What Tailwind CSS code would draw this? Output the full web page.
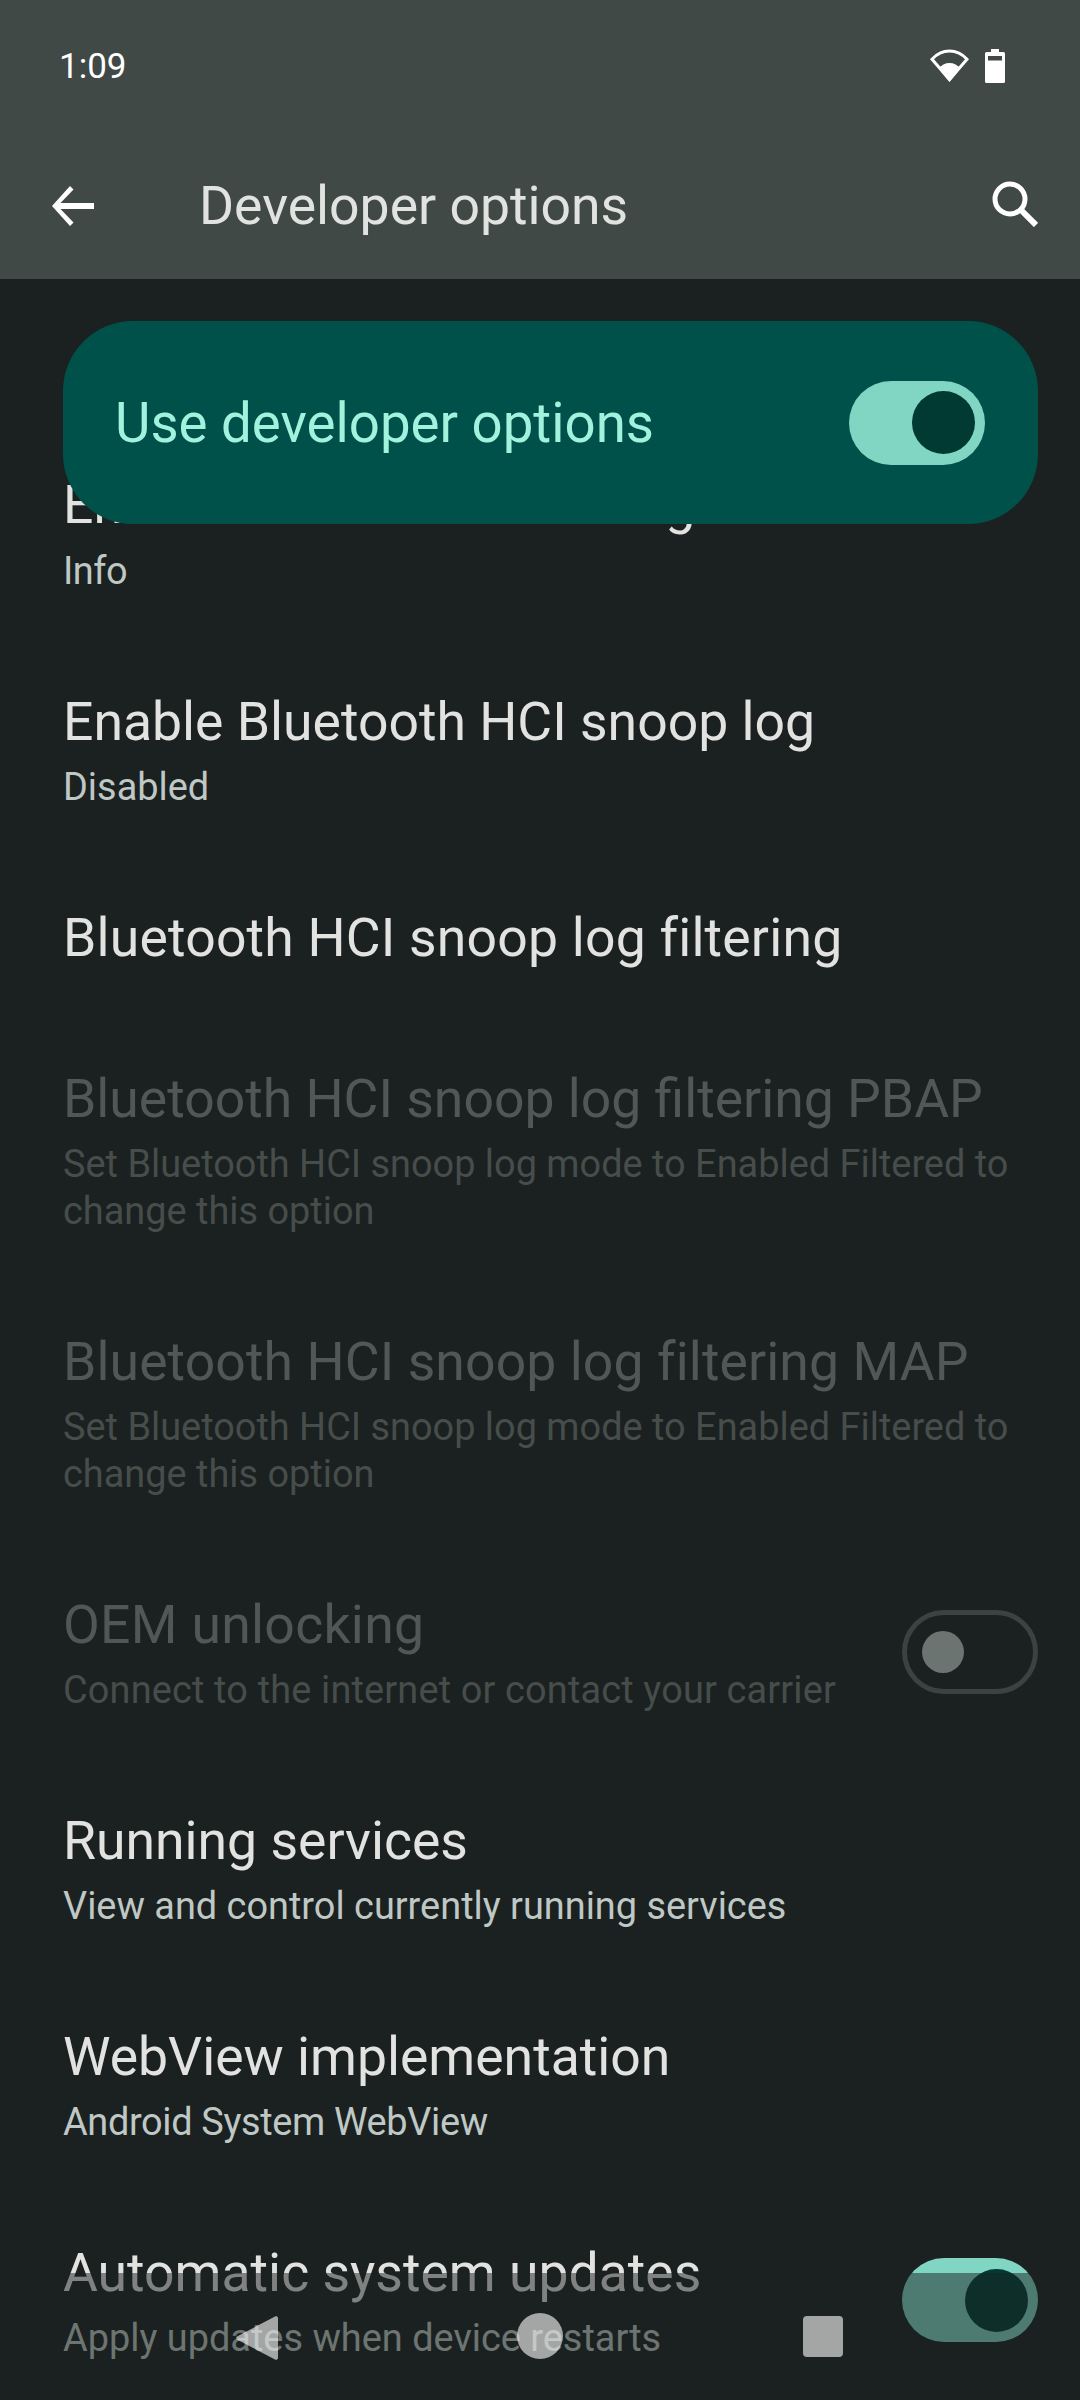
<!DOCTYPE html>
<html lang="en">
<head>
    <meta charset="UTF-8">
    <meta name="viewport" content="width=device-width, initial-scale=1.0">
    <title>Developer options</title>
    <script src="https://cdn.jsdelivr.net/npm/@tailwindcss/browser@4"></script>
</head>
<body class="antialiased">
    <div class="relative w-[1080px] h-[2400px] overflow-hidden bg-[#1b2120] font-[family-name:Roboto,sans-serif] flex flex-col">
        <!-- app bar -->
        <header class="h-[279px] shrink-0 bg-[#414946] flex flex-col">
            <div class="h-[132px] flex items-center justify-between pl-[59px] pr-[75px]">
                <span class="text-[35px] leading-none text-white">1:09</span>
                <div class="flex items-center gap-[16px]">
                    <svg class="w-[39px] h-[34px]" viewBox="0 0 39 34"><path d="M19.5 30.5 2 10.2C6.5 5.2 12.6 2 19.5 2S32.500 5.200 37 10.200Z" fill="none" stroke="#fff" stroke-width="3"/><path d="M19.500 33 8.500 19.500C11.500 16 15.200 14 19.500 14S27.500 16 30.500 19.500Z" fill="#fff"/></svg>
                    <svg class="w-[20px] h-[34px]" viewBox="0 0 20 34"><path d="M6 0h8v3h4.500A1.500 1.500 0 0 1 20 4.500V32.500A1.500 1.500 0 0 1 18.500 34H1.500A1.500 1.500 0 0 1 0 32.500V4.500A1.500 1.500 0 0 1 1.500 3H6Z M3 7v4.500h14V7Z" fill="#fff" fill-rule="evenodd"/></svg>
                </div>
            </div>
            <div class="h-[147px] flex items-center pl-[52px] pr-[42px]">
                <svg class="w-[42px] h-[42px] shrink-0" viewBox="0 0 42 42"><path d="M42 18H8.500L21.500 4.500 18 1 0 21l18 20 3.500-3.500L8.500 24H42Z" fill="#fff"/></svg>
                <h1 class="ml-[105px] text-[53.500px] leading-none text-[#e1e3e0] flex-1">Developer options</h1>
                <svg class="w-[46px] h-[46px] mb-[3px]" viewBox="0 0 46 46"><circle cx="18" cy="18" r="15" fill="none" stroke="#fff" stroke-width="5"/><path d="M29 29 44 44" stroke="#fff" stroke-width="6"/></svg>
            </div>
        </header>

        <!-- settings list, scrolled so the first row sits under the card -->
        <main class="flex-1 min-h-0 pt-[146px] pl-[63px] pr-[42px]">
            <div class="h-[216px] pt-[41px]">
                <p class="text-[53.500px] leading-[77px] text-[#e2e3e1]">Enable Bluetooth stack log</p>
                <p class="mt-[5px] text-[37.900px] leading-[47px] tracking-[-0.5px] text-[#bfc8c5]">Info</p>
            </div>
            <div class="h-[216px] pt-[42px]">
                <p class="text-[53.500px] leading-[77px] text-[#e2e3e1]">Enable Bluetooth HCI snoop log</p>
                <p class="mt-1 text-[37.900px] leading-[47px] text-[#bfc8c5]">Disabled</p>
            </div>
            <div class="h-[161px] pt-[42px]">
                <p class="text-[53.500px] leading-[77px] tracking-[0.2px] text-[#e2e3e1]">Bluetooth HCI snoop log filtering</p>
            </div>
            <div class="h-[263px] pt-[42px]">
                <p class="text-[53.500px] leading-[77px] text-[#4f5856]">Bluetooth HCI snoop log filtering PBAP</p>
                <p class="mt-1 text-[37.900px] leading-[47px] text-[#464d4b]">Set Bluetooth HCI snoop log mode to Enabled Filtered to change this option</p>
            </div>
            <div class="h-[263px] pt-[42px]">
                <p class="text-[53.500px] leading-[77px] tracking-[0.1px] text-[#4f5856]">Bluetooth HCI snoop log filtering MAP</p>
                <p class="mt-1 text-[37.900px] leading-[47px] text-[#464d4b]">Set Bluetooth HCI snoop log mode to Enabled Filtered to change this option</p>
            </div>
            <div class="h-[216px] flex items-center justify-between">
                <div class="pb-[4px]">
                    <p class="text-[53.500px] leading-[77px] tracking-[0.3px] text-[#4f5856]">OEM unlocking</p>
                    <p class="mt-1 text-[37.900px] leading-[47px] tracking-[0.16px] text-[#464d4b]">Connect to the internet or contact your carrier</p>
                </div>
                <div class="w-[136px] h-[84px] rounded-full border-[5px] border-[#3b4241] flex items-center pl-[15px]">
                    <div class="w-[42px] h-[42px] rounded-full bg-[#6b7471]"></div>
                </div>
            </div>
            <div class="h-[216px] pt-[42px]">
                <p class="text-[53.500px] leading-[77px] text-[#e2e3e1]">Running services</p>
                <p class="mt-1 text-[37.900px] leading-[47px] text-[#bfc8c5]">View and control currently running services</p>
            </div>
            <div class="h-[216px] pt-[42px]">
                <p class="text-[53.500px] leading-[77px] text-[#e2e3e1]">WebView implementation</p>
                <p class="mt-1 text-[37.900px] leading-[47px] tracking-[-0.35px] text-[#bfc8c5]">Android System WebView</p>
            </div>
            <div class="h-[216px] flex items-center justify-between">
                <div class="pb-[4px]">
                    <p class="text-[53.500px] leading-[77px] text-[#e2e3e1]">Automatic system updates</p>
                    <p class="mt-1 text-[37.900px] leading-[47px] text-[#bfc8c5]">Apply updates when device restarts</p>
                </div>
                <div class="w-[136px] h-[84px] rounded-full bg-[#80d5c3] flex items-center justify-end pr-[10px]">
                    <div class="w-[63px] h-[63px] rounded-full bg-[#003a33]"></div>
                </div>
            </div>
        </main>

        <!-- sticky main switch over the list -->
        <div class="absolute left-[63px] top-[321px] w-[975px] h-[203px] rounded-[70px] bg-[#00514a] flex items-center justify-between pl-[52px] pr-[53px]">
            <span class="pt-[2px] text-[54.600px] leading-none text-[#a2f2dd]">Use developer options</span>
            <div class="w-[136px] h-[84px] rounded-full bg-[#80d5c3] flex items-center justify-end pr-[10px]">
                <div class="w-[63px] h-[63px] rounded-full bg-[#003a33]"></div>
            </div>
        </div>

        <!-- gesture nav scrim and buttons -->
        <div class="absolute left-0 right-0 bottom-0 h-[127px] bg-[#1b2120]/50">
            <svg class="absolute left-[236px] top-[42px] w-[42px] h-[46px]" viewBox="0 0 42 46"><path d="M39 1.500C40 .800 42 1.500 42 3V43C42 44.500 40 45.200 39 44.500L1 24.500C0 24 0 22 1 21.500Z" fill="#fff" fill-opacity=".6"/></svg>
            <div class="absolute left-[517px] top-[40px] w-[46px] h-[46px] rounded-full bg-white/60"></div>
            <div class="absolute left-[803px] top-[43px] w-[40px] h-[41px] rounded-[4px] bg-white/60"></div>
        </div>
    </div>
</body>
</html>
